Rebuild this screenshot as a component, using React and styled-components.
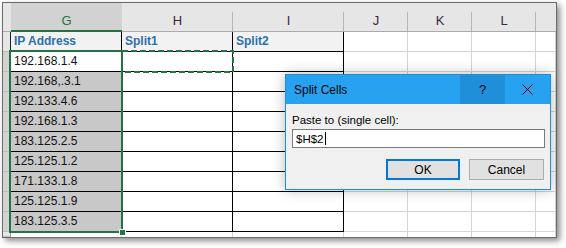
import React from "react";
import styled, { createGlobalStyle, css } from "styled-components";

const GlobalStyle = createGlobalStyle`
  html, body { margin: 0; padding: 0; background: #ffffff; }
  * { box-sizing: border-box; }
`;

const Page = styled.div`
  position: relative;
  width: 566px;
  height: 248px;
  overflow: hidden;
  padding: 2px 0 0 2px;
  font-family: "Liberation Sans", Arial, sans-serif;
`;

const Frame = styled.div`
  position: relative;
  width: 555px;
  height: 236px;
  border: 1px solid #6b6b6b;
  box-shadow: 3px 3px 6px rgba(0, 0, 0, 0.45);
  overflow: hidden;
  background: #fff;
`;

const Grid = styled.div`
  display: grid;
  grid-template-columns: 8px 111px 111px 111px 64px 64px 64px 20px;
  grid-template-rows: 29px repeat(10, 20px) 5px;
`;

const ColHeader = styled.div`
  position: relative;
  background: ${(p) => (p.$selected ? "#d2d2d2" : "#e6e6e6")};
  border-bottom: ${(p) => (p.$selected ? "2px solid #217346" : "1px solid #ababab")};
  color: ${(p) => (p.$selected ? "#217346" : "#3a2a40")};
  font-size: 13px;
  line-height: 13px;
  text-align: center;
  padding-top: 11px;
  &::after {
    content: "";
    position: absolute;
    right: 0;
    top: 9px;
    bottom: 0;
    width: 1px;
    background: ${(p) => (p.$noSep ? "transparent" : "#b4b4b4")};
  }
`;

const RowHeader = styled.div`
  background: ${(p) => (p.$selected ? "#d2d2d2" : "#e6e6e6")};
  border-right: 1px solid ${(p) => (p.$dark ? "#1e1e1e" : "#9e9e9e")};
  border-bottom: 1px solid #bdbdbd;
`;

const cellVariants = {
  head: css`
    background: #f2f2f2;
    color: #2e6fae;
    font-weight: bold;
    border-right: 1px solid #000;
    border-bottom: 1px solid #000;
  `,
  gray: css`
    background: #c8c8c8;
    color: #111;
    border-right: 1px solid #000;
    border-bottom: 1px solid #000;
  `,
  table: css`
    background: #fff;
    color: #111;
    border-right: 1px solid #000;
    border-bottom: 1px solid #000;
  `,
  plain: css`
    background: #fff;
    border-right: 1px solid #d4d4d4;
    border-bottom: 1px solid #d4d4d4;
  `,
  tail: css`
    background: #fff;
    border-right: 1px solid #d4d4d4;
  `,
};

const Cell = styled.div`
  font-size: 12px;
  line-height: 19px;
  padding: 0 3px;
  white-space: nowrap;
  overflow: hidden;
  ${(p) => cellVariants[p.$variant]}
`;

const Selection = styled.div`
  position: absolute;
  left: 6px;
  top: 47px;
  width: 114px;
  height: 183px;
  border: 2px solid #217346;
  pointer-events: none;
`;

const Handle = styled.div`
  position: absolute;
  left: 116px;
  top: 226px;
  width: 7px;
  height: 7px;
  background: #217346;
  border: 1px solid #fff;
`;

const Ants = styled.svg`
  position: absolute;
  left: 118px;
  top: 47px;
  width: 113px;
  height: 23px;
  overflow: visible;
`;

const Dialog = styled.div`
  position: absolute;
  left: 285px;
  top: 74px;
  width: 266px;
  height: 116px;
  border: 1px solid #1a8fe3;
  background: #f0f0f0;
  box-shadow: 0 0 12px rgba(0, 0, 0, 0.28);
  display: flex;
  flex-direction: column;
`;

const TitleBar = styled.div`
  display: flex;
  align-items: stretch;
  height: 29px;
  background: #27a2f1;
`;

const Title = styled.div`
  flex: 1;
  display: flex;
  align-items: center;
  padding-left: 8px;
  font-size: 12px;
  color: #000;
`;

const TitleButton = styled.div`
  width: 45px;
  display: flex;
  align-items: center;
  justify-content: center;
  font-size: 13px;
  color: #000;
  background: ${(p) => (p.$hover ? "#1f8fd9" : "transparent")};
`;

const Body = styled.div`
  padding: 9px 5px 0 6px;
  font-size: 11.5px;
  color: #000;
`;

const Label = styled.div`
  line-height: 14px;
`;

const Input = styled.div`
  margin-top: 2px;
  height: 19px;
  border: 1px solid #7a7a7a;
  background: #fff;
  display: flex;
  align-items: center;
  padding-left: 3px;
  font-size: 11.5px;
`;

const Caret = styled.span`
  display: inline-block;
  width: 1px;
  height: 13px;
  background: #000;
  margin-left: 1px;
`;

const ButtonRow = styled.div`
  display: flex;
  justify-content: flex-end;
  gap: 9px;
  margin-top: 11px;
  padding-right: 1px;
`;

const Button = styled.div`
  width: ${(p) => p.$w}px;
  height: 21px;
  background: #e1e1e1;
  border: ${(p) => (p.$default ? "2px solid #0078d7" : "1px solid #adadad")};
  display: flex;
  align-items: center;
  justify-content: center;
  font-size: 12px;
  color: #000;
`;

const columns = ["G", "H", "I", "J", "K", "L", ""];
const ips = [
  "192.168.1.4",
  "192.168,.3.1",
  "192.133.4.6",
  "192.168.1.3",
  "183.125.2.5",
  "125.125.1.2",
  "171.133.1.8",
  "125.125.1.9",
  "183.125.3.5",
];

export default function App() {
  const rows = [];
  rows.push(
    <React.Fragment key="r1">
      <RowHeader $dark />
      <Cell $variant="head">IP Address</Cell>
      <Cell $variant="head">Split1</Cell>
      <Cell $variant="head">Split2</Cell>
      <Cell $variant="plain" />
      <Cell $variant="plain" />
      <Cell $variant="plain" />
      <Cell $variant="plain" />
    </React.Fragment>
  );
  ips.forEach((ip, i) => {
    rows.push(
      <React.Fragment key={ip + i}>
        <RowHeader $selected $dark />
        <Cell $variant={i === 0 ? "table" : "gray"}>{ip}</Cell>
        <Cell $variant="table" />
        <Cell $variant="table" />
        <Cell $variant="plain" />
        <Cell $variant="plain" />
        <Cell $variant="plain" />
        <Cell $variant="plain" />
      </React.Fragment>
    );
  });

  return (
    <>
      <GlobalStyle />
      <Page>
        <Frame>
          <Grid>
            <ColHeader $noSep />
            {columns.map((c, i) => (
              <ColHeader key={i} $selected={c === "G"} $noSep={c === "G" || c === ""}>
                {c}
              </ColHeader>
            ))}
            {rows}
            <RowHeader />
            <Cell $variant="tail" />
            <Cell $variant="tail" />
            <Cell $variant="tail" />
            <Cell $variant="tail" />
            <Cell $variant="tail" />
            <Cell $variant="tail" />
            <Cell $variant="tail" />
          </Grid>
          <Selection />
          <Ants viewBox="0 0 113 23">
            <rect x="1" y="1" width="111" height="21" fill="none" stroke="#217346" strokeWidth="2" strokeDasharray="6 3" />
          </Ants>
          <Handle />
        </Frame>
        <Dialog>
          <TitleBar>
            <Title>Split Cells</Title>
            <TitleButton $hover>?</TitleButton>
            <TitleButton>
              <svg width="11" height="11" viewBox="0 0 11 11">
                <path d="M0.5 0.5 L10.5 10.5 M10.5 0.5 L0.5 10.5" stroke="#000" strokeWidth="1" fill="none" />
              </svg>
            </TitleButton>
          </TitleBar>
          <Body>
            <Label>Paste to (single cell):</Label>
            <Input>
              $H$2
              <Caret />
            </Input>
            <ButtonRow>
              <Button $default $w={74}>OK</Button>
              <Button $w={75}>Cancel</Button>
            </ButtonRow>
          </Body>
        </Dialog>
      </Page>
    </>
  );
}
